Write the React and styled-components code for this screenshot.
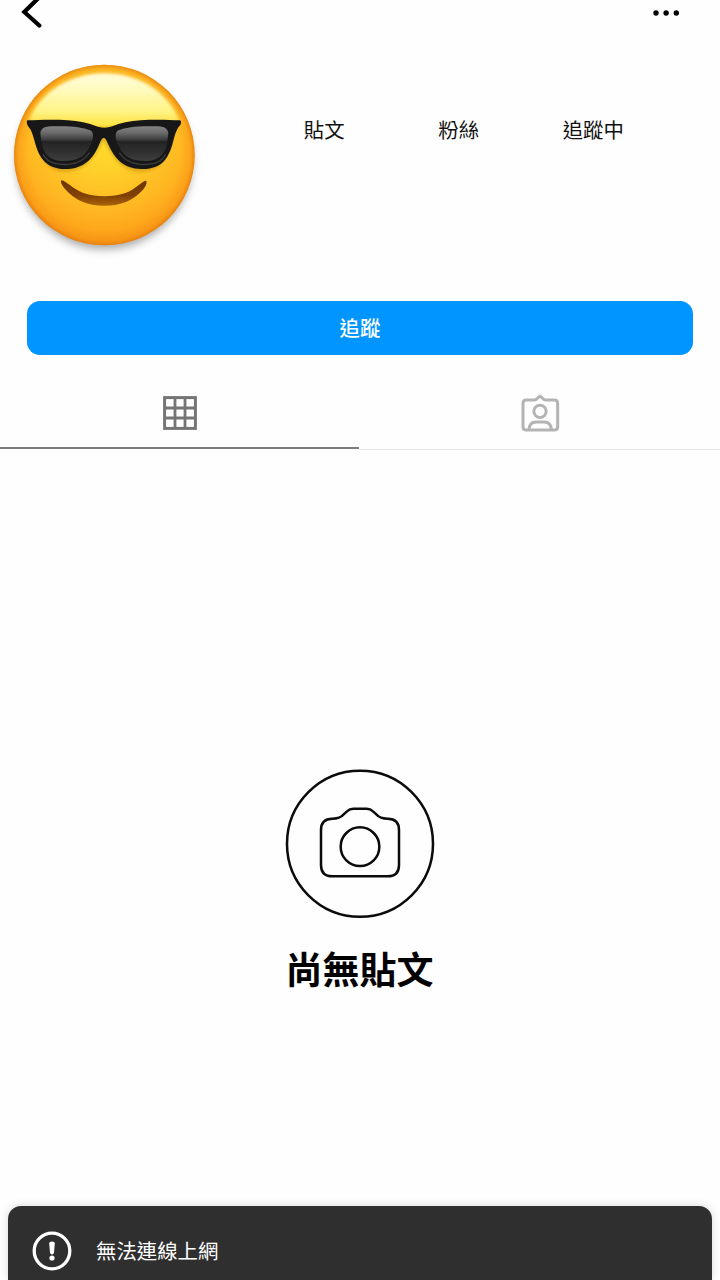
import React from 'react';
import styled, { createGlobalStyle } from 'styled-components';

function BackIcon() {
  return (
    <svg width="24" height="30" viewBox="0 0 24 30" fill="none">
      <path d="M20.5 -3L5.3 12L20.3 25.5" stroke="#000" strokeWidth="4.2" strokeLinecap="round" />
    </svg>
  );
}

function MoreIcon() {
  return (
    <svg width="28" height="8" viewBox="0 0 28 8">
      <circle cx="4" cy="4" r="2.7" />
      <circle cx="14.1" cy="4" r="2.7" />
      <circle cx="24.3" cy="4" r="2.7" />
    </svg>
  );
}

function CoolFace() {
  return (
    <svg width="220" height="215" viewBox="0 0 660 645">
      <defs>
        <radialGradient id="face" gradientUnits="userSpaceOnUse" cx="313" cy="235" r="355">
          <stop offset="0" stopColor="#ffe02c" />
          <stop offset="0.35" stopColor="#ffd02a" />
          <stop offset="0.68" stopColor="#ffb822" />
          <stop offset="0.86" stopColor="#fea71c" />
          <stop offset="1" stopColor="#f79415" />
        </radialGradient>
        <radialGradient id="rim" gradientUnits="userSpaceOnUse" cx="313" cy="315" r="271">
          <stop offset="0.84" stopColor="#f28a10" stopOpacity="0" />
          <stop offset="0.95" stopColor="#f28a10" stopOpacity="0.3" />
          <stop offset="1" stopColor="#df770c" stopOpacity="0.75" />
        </radialGradient>
        <linearGradient id="shine" x1="0" y1="0" x2="0" y2="1">
          <stop offset="0" stopColor="#fffbd8" />
          <stop offset="0.3" stopColor="#fffabe" />
          <stop offset="0.7" stopColor="#fff484" />
          <stop offset="1" stopColor="#ffe544" stopOpacity="0.7" />
        </linearGradient>
        <linearGradient id="lens" x1="0" y1="0" x2="0" y2="1">
          <stop offset="0" stopColor="#858585" />
          <stop offset="0.2" stopColor="#686868" />
          <stop offset="0.4" stopColor="#3a3a3a" />
          <stop offset="0.44" stopColor="#242424" />
          <stop offset="0.75" stopColor="#303030" />
          <stop offset="1" stopColor="#3e3e3e" />
        </linearGradient>
        <linearGradient id="mouth" x1="0" y1="0" x2="0" y2="1">
          <stop offset="0" stopColor="#6a3503" />
          <stop offset="0.6" stopColor="#804105" />
          <stop offset="1" stopColor="#a96309" />
        </linearGradient>
        <filter id="soft" x="-20%" y="-20%" width="140%" height="140%">
          <feGaussianBlur stdDeviation="12" />
        </filter>
        <filter id="edge" x="-10%" y="-10%" width="120%" height="120%">
          <feGaussianBlur stdDeviation="4" />
        </filter>
      </defs>
      <circle cx="313" cy="334" r="264" fill="#555" opacity="0.5" filter="url(#soft)" />
      <circle cx="313" cy="315" r="271" fill="url(#face)" />
      <circle cx="313" cy="315" r="271" fill="url(#rim)" />
      <path
        d="M88 208C125 122 213 70 313 70C413 70 500 122 537 208C540 223 500 218 430 216C370 218 340 234 313 234C286 234 250 214 190 214C120 214 85 222 88 208Z"
        fill="url(#shine)"
        filter="url(#edge)"
      />
      <path
        d="M100 230C114 315 135 364 195 366C255 366 285 320 311 273C338 325 365 366 425 366C488 364 510 315 525 230Z"
        fill="#9b6200"
        opacity="0.3"
        filter="url(#edge)"
      />
      <path
        d="M82 211C130 209 198 206 250 217C284 224 289 233 313 233C337 233 342 224 376 217C428 206 496 209 540 211C544 213 544 219 541 225C531 235 526 250 520 272C507 325 486 356 429 357C371 359 345 326 326 286C320 272 317 264 311 264C305 264 302 274 296 287C277 330 248 357 194 357C140 356 118 325 105 278C98 251 94 241 86 231C81 225 79 214 82 211Z"
        fill="#171717"
      />
      <path
        d="M121 249C124 233 135 229 162 229C205 227 248 231 271 241C285 250 279 270 268 292C251 326 225 334 184 333C146 331 132 310 125 283Z"
        fill="url(#lens)"
      />
      <path
        d="M505 249C502 233 491 229 464 229C421 227 378 231 355 241C341 250 347 270 358 292C375 326 401 334 442 333C480 331 494 310 501 283Z"
        fill="url(#lens)"
      />
      <path d="M129 313C146 344 179 345 207 343C238 340 257 325 269 308M497 313C480 344 447 345 419 343C388 340 369 325 357 308" fill="none" stroke="#3c3c3c" strokeWidth="4" />
      <path
        d="M184 391C193 388 217 416 250 429C291 442 335 442 376 429C409 416 431 390 438 392C443 396 437 410 429 419C397 454 359 467 312 467C265 467 225 452 195 417C187 408 180 396 184 391Z"
        fill="url(#mouth)"
      />
    </svg>
  );
}

function GridIcon() {
  return (
    <svg width="34" height="34" viewBox="0 0 34 34" fill="none" stroke="#757575">
      <rect x="1.6" y="1.6" width="30.8" height="30.8" strokeWidth="3" />
      <path d="M12 1V33M22 1V33M1 12H33M1 22H33" strokeWidth="2.8" />
    </svg>
  );
}

function TaggedIcon() {
  return (
    <svg width="40" height="40" viewBox="60 38 120 120" fill="none" stroke="#b4b4b4" strokeWidth="9" strokeLinejoin="round">
      <path d="M79 59H104Q108 59 111 55L120 47L129 55Q132 59 136 59H163Q173 59 173 69V139Q173 149 163 149H79Q69 149 69 139V69Q69 59 79 59Z" />
      <circle cx="120" cy="93" r="18.5" />
      <path d="M87 148C88 130 97 125 108 125H133C145 125 153 131 154 148" />
    </svg>
  );
}

function CameraIcon() {
  return (
    <svg width="150" height="150" viewBox="45 39 450 450" fill="none" stroke="#0b0b0b" strokeWidth="7.5">
      <circle cx="270" cy="266" r="219" />
      <path d="M187 191C205 191 212 188 221 178L231 169Q239 161 250 161H290Q301 161 309 169L319 178C328 188 335 191 353 191Q387 191 387 225V330Q387 364 353 364H187Q153 364 153 330V225Q153 191 187 191Z" />
      <circle cx="270" cy="275" r="58" />
    </svg>
  );
}

function AlertIcon() {
  return (
    <svg width="40" height="40" viewBox="0 0 40 40">
      <circle cx="20" cy="20" r="17.8" fill="none" stroke="#fff" strokeWidth="3.3" />
      <path d="M17.2 12.4Q17.2 10.4 20 10.4Q22.8 10.4 22.8 12.4L22 21.5Q21.8 23.4 20 23.4Q18.2 23.4 18 21.5Z" fill="#fff" />
      <circle cx="20" cy="27" r="2.6" fill="#fff" />
    </svg>
  );
}

function App() {
  return (
    <Page>
      <GlobalStyle />
      <TopBar>
        <IconButton aria-label="返回"><BackIcon /></IconButton>
        <MoreButton aria-label="更多"><MoreIcon /></MoreButton>
      </TopBar>
      <Profile>
        <CoolFace />
        <Stats>
          <Stat>貼文</Stat>
          <Stat>粉絲</Stat>
          <Stat>追蹤中</Stat>
        </Stats>
      </Profile>
      <FollowButton>追蹤</FollowButton>
      <Tabs>
        <Tab $active><GridIcon /></Tab>
        <Tab><TaggedIcon /></Tab>
      </Tabs>
      <Empty>
        <CameraIcon />
        <EmptyTitle>尚無貼文</EmptyTitle>
      </Empty>
      <Toast>
        <AlertIcon />
        <ToastText>無法連線上網</ToastText>
      </Toast>
    </Page>
  );
}

const GlobalStyle = createGlobalStyle`
    *{
        box-sizing: border-box;
    }
    body{
        margin:0;
        background:#fefefe;
    }
    svg{
        display:block;
        flex-shrink:0;
    }
`
const Page = styled.div`
    width:720px;
    height:1280px;
    display: flex;
    flex-direction: column;
    overflow:hidden;
    background:#fefefe;
    color:#111;
    font-family: "Noto Sans CJK TC", sans-serif;
`
const TopBar = styled.header`
    height:50px;
    padding:0 40px 0 19px;
    display: flex;
    align-items: flex-start;
    justify-content: space-between;
`
const IconButton = styled.button`
    padding:0;
    border:none;
    background:none;
`
const MoreButton = styled(IconButton)`
    padding-top:9px;
`
const Profile = styled.section`
    height:251px;
    display: flex;
`
const Stats = styled.div`
    margin-left:37px;
    padding-top:64px;
    display: grid;
    grid-template-columns: repeat(3, 134.5px);
`
const Stat = styled.div`
    font-size:20.4px;
    line-height:30px;
    text-align:center;
`
const FollowButton = styled.button`
    height:54px;
    flex-shrink:0;
    margin:0 27px;
    padding:0 0 2px;
    border:none;
    border-radius:13px;
    background:#0095ff;
    color:#fff;
    font-family:inherit;
    font-size:20.4px;
    font-weight:500;
`
const Tabs = styled.nav`
    height:95px;
    display: flex;
`
const Tab = styled.div`
    width:${props => props.$active ? '359px' : '361px'};
    padding-top:${props => props.$active ? '40.5px' : '38px'};
    padding-left:${props => props.$active ? '1px' : '0'};
    height:${props => props.$active ? '94px' : '95px'};
    display: flex;
    justify-content: center;
    border-bottom:${props => props.$active ? '2px solid #7c7c7c' : '1px solid #e6e6e6'};
`
const Empty = styled.main`
    flex:1;
    padding-top:318px;
    display: flex;
    flex-direction: column;
    align-items: center;
`
const EmptyTitle = styled.h1`
    margin:23px 1px 0 0;
    color:#000;
    font-size:37px;
    font-weight:700;
    line-height:54px;
`
const Toast = styled.div`
    height:74px;
    flex-shrink:0;
    margin:0 8px;
    padding:25px 24px 0;
    display: flex;
    align-items: flex-start;
    border-radius:13px 13px 0 0;
    background:#2f2f2f;
    box-shadow: 0 0 9px rgba(0, 0, 0, 0.16);
`
const ToastText = styled.p`
    margin:4px 0 0 24px;
    color:#fff;
    font-size:20.4px;
    line-height:30px;
`

export default App;
